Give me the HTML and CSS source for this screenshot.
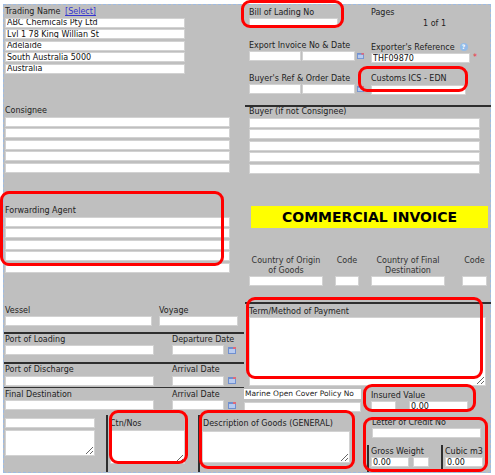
FILE: index.html
```html
<!DOCTYPE html>
<html lang="en">
<head>
<meta charset="utf-8">
<title>Commercial Invoice</title>
<link rel="stylesheet" href="styles.css">
</head>
<body>
<div class="sheet">
  <div class="top">
    <div class="col-left">
      <div class="block trading">
        <div class="lbl">Trading Name <a class="sel" href="#">[Select]</a></div>
        <div class="rows w180">
          <input class="inp" value="ABC Chemicals Pty Ltd">
          <input class="inp" value="Lvl 1 78 King Willian St">
          <input class="inp" value="Adelaide">
          <input class="inp" value="South Australia 5000">
          <input class="inp" value="Australia">
        </div>
      </div>
      <div class="block consignee">
        <div class="lbl">Consignee</div>
        <div class="rows w225">
          <input class="inp"><input class="inp"><input class="inp"><input class="inp"><input class="inp">
        </div>
      </div>
      <div class="block agent">
        <div class="lbl">Forwarding Agent</div>
        <div class="rows w225">
          <input class="inp"><input class="inp"><input class="inp"><input class="inp"><input class="inp">
        </div>
      </div>
      <div class="pair vessel-row">
        <div class="fld w147"><div class="lbl">Vessel</div><input class="inp full"></div>
        <div class="fld voyage"><div class="lbl">Voyage</div><input class="inp full"></div>
      </div>
      <div class="rule thick r1"></div>
      <div class="pair port-row">
        <div class="fld w149"><div class="lbl">Port of Loading</div><input class="inp full"></div>
        <div class="fld date">
          <div class="lbl">Departure Date</div>
          <div class="line"><input class="inp w52"><svg class="cal" width="8" height="7" viewBox="0 0 8 7"><rect x="0" y="0" width="8" height="7" fill="#6f8fd0"/><rect x="1" y="2" width="6" height="4" fill="#b8cbef"/><rect x="5" y="0" width="3" height="2" fill="#e06a78"/></svg></div>
        </div>
      </div>
      <div class="rule thick r2"></div>
      <div class="pair port-row discharge">
        <div class="fld w149"><div class="lbl">Port of Discharge</div><input class="inp full"></div>
        <div class="fld date">
          <div class="lbl">Arrival Date</div>
          <div class="line"><input class="inp w52"><svg class="cal" width="8" height="7" viewBox="0 0 8 7"><rect x="0" y="0" width="8" height="7" fill="#6f8fd0"/><rect x="1" y="2" width="6" height="4" fill="#b8cbef"/><rect x="5" y="0" width="3" height="2" fill="#e06a78"/></svg></div>
        </div>
      </div>
      <div class="rule thin"></div>
      <div class="pair port-row final">
        <div class="fld w149"><div class="lbl">Final Destination</div><input class="inp full"></div>
        <div class="fld date">
          <div class="lbl">Arrival Date</div>
          <div class="line"><input class="inp w52"><svg class="cal" width="8" height="7" viewBox="0 0 8 7"><rect x="0" y="0" width="8" height="7" fill="#6f8fd0"/><rect x="1" y="2" width="6" height="4" fill="#b8cbef"/><rect x="5" y="0" width="3" height="2" fill="#e06a78"/></svg></div>
        </div>
      </div>
    </div>

    <div class="col-right">
      <div class="rrow bill-row">
        <div class="fld w122"><div class="lbl">Bill of Lading No</div><input class="inp w89"></div>
        <div class="fld"><div class="lbl">Pages</div><div class="pages">1 of 1</div></div>
      </div>
      <div class="rrow exp-row">
        <div class="fld w122">
          <div class="lbl">Export Invoice No &amp; Date</div>
          <div class="line"><input class="inp w52"><input class="inp w53 gap1"><svg class="cal sm" width="7" height="6" viewBox="0 0 8 7"><rect x="0" y="0" width="8" height="7" fill="#6f8fd0"/><rect x="1" y="2" width="6" height="4" fill="#b8cbef"/><rect x="5" y="0" width="3" height="2" fill="#e06a78"/></svg></div>
        </div>
        <div class="fld ref">
          <div class="lbl">Exporter's Reference<span class="help">?</span></div>
          <div class="line"><input class="inp w99" value="THF09870"><span class="req">*</span></div>
        </div>
      </div>
      <div class="rrow buyref-row">
        <div class="fld w122">
          <div class="lbl">Buyer's Ref &amp; Order Date</div>
          <div class="line"><input class="inp w52"><input class="inp w53 gap1"><svg class="cal sm" width="7" height="6" viewBox="0 0 8 7"><rect x="0" y="0" width="8" height="7" fill="#6f8fd0"/><rect x="1" y="2" width="6" height="4" fill="#b8cbef"/><rect x="5" y="0" width="3" height="2" fill="#e06a78"/></svg></div>
        </div>
        <div class="fld">
          <div class="lbl">Customs ICS - EDN</div>
          <input class="inp w95 customs">
        </div>
      </div>
      <div class="rule thick rt1"></div>
      <div class="block buyer">
        <div class="lbl">Buyer (if not Consignee)</div>
        <div class="rows w231">
          <input class="inp"><input class="inp"><input class="inp"><input class="inp"><input class="inp">
        </div>
      </div>
      <div class="banner">COMMERCIAL INVOICE</div>
      <div class="country-row">
        <div class="cfld c1"><div class="clbl">Country of Origin<br>of Goods</div><input class="inp full"></div>
        <div class="cfld c2"><div class="clbl">Code<br>&nbsp;</div><input class="inp full"></div>
        <div class="cfld c3"><div class="clbl">Country of Final<br>Destination</div><input class="inp full"></div>
        <div class="cfld c4"><div class="clbl">Code<br>&nbsp;</div><input class="inp full"></div>
      </div>
      <div class="rule thick rt2"></div>
      <div class="term">
        <div class="lbl">Term/Method of Payment</div>
        <textarea class="ta term-ta"></textarea>
      </div>
      <div class="rrow marine-row">
        <div class="fld marine">
          <div class="marine-lbl">Marine Open Cover Policy No</div>
          <input class="inp full marine-inp">
        </div>
        <div class="fld insured">
          <div class="lbl">Insured Value</div>
          <div class="line"><input class="inp w25"><input class="inp w59 gap13" value="0.00"></div>
        </div>
      </div>
    </div>
  </div>

  <div class="bottom">
    <div class="cell cell-a">
      <input class="inp w90 a-inp">
      <textarea class="ta a-ta"></textarea>
    </div>
    <div class="vline"></div>
    <div class="cell cell-b">
      <div class="lbl">Ctn/Nos</div>
      <textarea class="ta b-ta"></textarea>
    </div>
    <div class="vline"></div>
    <div class="cell cell-c">
      <div class="lbl">Description of Goods (GENERAL)</div>
      <textarea class="ta c-ta"></textarea>
    </div>
    <div class="cell cell-d">
      <div class="lbl">Letter of Credit No</div>
      <input class="inp w109">
      <div class="weights">
        <div class="vline short"></div>
        <div class="fld gross">
          <div class="lbl">Gross Weight</div>
          <div class="line"><input class="inp w38" value="0.00"><input class="inp w16 gap4"></div>
        </div>
        <div class="vline short v2"></div>
        <div class="fld cubic">
          <div class="lbl">Cubic m3</div>
          <input class="inp w38" value="0.00">
        </div>
      </div>
    </div>
  </div>
</div>

<div class="mark m1"></div>
<div class="mark m2"></div>
<div class="mark m3"></div>
<div class="mark m4"></div>
<div class="mark m5"></div>
<div class="mark m6"></div>
<div class="mark m7"></div>
<div class="mark m8"></div>
</body>
</html>
```

FILE: styles.css
```css
* { box-sizing: border-box; }

html, body {
  margin: 0;
  padding: 0;
  background: #ffffff;
}

body {
  position: relative;
  width: 495px;
  height: 475px;
  overflow: hidden;
  font-family: "DejaVu Sans", Verdana, sans-serif;
  font-size: 8px;
  color: #222;
}

.sheet {
  margin: 4px 0 0 3px;
  width: 488px;
  height: 469px;
  border: 1px dashed #9dbbe3;
  background: #bfbfbf;
  display: flex;
  flex-direction: column;
}

.top {
  display: flex;
  height: 408px;
}

.col-left {
  width: 240px;
  padding-left: 1px;
}

.col-right {
  width: 246px;
  padding-left: 5px;
}

.lbl {
  height: 10px;
  line-height: 10px;
  white-space: nowrap;
}

.sel {
  color: #3535cf;
  text-decoration: underline;
  margin-left: 2px;
}

.inp {
  display: block;
  height: 10px;
  margin: 0;
  padding: 0 1px;
  border: 1px solid #d2d2d2;
  background: #fff;
  font-family: "DejaVu Sans", Verdana, sans-serif;
  font-size: 8px;
  color: #111;
  outline: none;
}

.ta {
  display: block;
  margin: 0;
  padding: 0;
  border: 1px solid #d2d2d2;
  background: #fff;
  font-family: "DejaVu Sans", Verdana, sans-serif;
  font-size: 8px;
  outline: none;
}

.full { width: 100%; }
.w25 { width: 25px; }
.w16 { width: 16px; }
.w38 { width: 38px; }
.w52 { width: 52px; }
.w53 { width: 53px; }
.w59 { width: 59px; }
.w89 { width: 89px; }
.w90 { width: 90px; }
.w95 { width: 95px; }
.w99 { width: 99px; }
.w109 { width: 109px; }
.gap1 { margin-left: 1px; }
.gap4 { margin-left: 4px; }
.gap13 { margin-left: 13px; }

.rows {
  display: flex;
  flex-direction: column;
  gap: 1.5px;
  padding-top: 0.5px;
}
.rows .inp { width: 100%; }
.w180 { width: 180px; }
.w225 { width: 225px; }
.w231 { width: 231px; }

.trading { margin-top: 2px; }
.consignee { margin-top: 32.5px; }
.agent { margin-top: 33.5px; }

.pair { display: flex; }
.fld { flex: none; }
.w147 { width: 147px; }
.w149 { width: 149px; }
.w122 { width: 122px; }

.vessel-row { margin-top: 33.5px; }
.voyage { width: 79px; margin-left: 7px; }

.line { display: flex; align-items: center; }

.date { margin-left: 18px; }
.cal { display: block; margin-left: 4px; }
.cal.sm { margin-left: 2px; }

.rule {
  height: 2px;
  background: #2e2e2e;
}
.rule.thin { height: 1px; margin-top: 1px; background: #333; }

.col-left .rule { margin-left: -1px; width: 240px; }
.r1 { margin-top: 5.5px; }
.port-row { margin-top: 1.5px; }
.r2 { margin-top: 6.5px; }
.discharge .inp { margin-top: 1px; }
.final { margin-top: 2px; }

/* right column */
.rrow { display: flex; }
.bill-row { margin-top: 3px; }
.pages {
  height: 10px;
  line-height: 10px;
  margin-top: 1px;
  margin-left: 52px;
}
.exp-row { margin-top: 12px; }
.ref { margin-top: 2px; }
.help {
  display: inline-block;
  width: 8px;
  height: 8px;
  margin-left: 5px;
  border-radius: 50%;
  background: #93bbe8;
  color: #fff;
  font-size: 6px;
  font-weight: bold;
  line-height: 8px;
  text-align: center;
  vertical-align: 1px;
}
.req {
  color: #ee3344;
  font-size: 8px;
  margin-left: 3px;
  line-height: 8px;
}
.buyref-row { margin-top: 11px; }
.customs { margin-top: 1px; }

.rt1 { margin-top: 9.5px; margin-left: -4px; width: 246px; }
.buyer { margin-top: 0.5px; }

.banner {
  margin-top: 32.5px;
  margin-left: 2px;
  width: 237px;
  height: 22px;
  background: #ffff00;
  color: #000;
  font-size: 14px;
  font-weight: bold;
  line-height: 22px;
  text-align: center;
  white-space: nowrap;
}

.country-row {
  display: flex;
  margin-top: 28px;
}
.cfld { flex: none; }
.clbl {
  height: 19px;
  line-height: 9.5px;
  text-align: center;
  white-space: nowrap;
  color: #333;
  display: flex;
  flex-direction: column;
  align-items: center;
}
.cfld .inp { margin-top: 1px; }
.c1 { width: 74px; }
.c2 { width: 24px; margin-left: 12px; }
.c3 { width: 74px; margin-left: 12px; }
.c4 { width: 25px; margin-left: 17px; }

.rt2 { margin-top: 16px; margin-left: -4px; width: 246px; }

.term { margin-top: 3px; }
.term-ta { width: 237px; height: 69px; }

.marine-row { margin-top: 3px; }
.marine { width: 117px; margin-left: -5px; }
.marine-lbl {
  height: 10px;
  line-height: 10px;
  background: #fff;
  font-size: 7.5px;
  padding-left: 1px;
  white-space: nowrap;
  overflow: hidden;
}
.marine-inp { margin-top: 3px; }
.insured { margin-left: 10px; margin-top: 2px; }

/* bottom */
.bottom {
  display: flex;
  flex: 1;
}
.cell { flex: none; }
.cell-a { width: 102px; padding-left: 1px; }
.a-inp { margin-top: 5px; }
.a-ta { margin-top: 2px; width: 90px; height: 26px; }

.vline {
  flex: none;
  width: 2px;
  margin-top: 2px;
  background: #2e2e2e;
}

.cell-b { width: 90px; padding-left: 2px; }
.cell-b .lbl { margin-top: 6px; }
.b-ta { margin-top: 1px; width: 75px; height: 34px; }

.cell-c { width: 166px; padding-left: 2px; }
.cell-c .lbl { margin-top: 6px; padding-left: 1px; }
.c-ta { margin-top: 2px; width: 148px; height: 32px; }

.cell-d { width: 124px; padding-left: 6px; }
.cell-d > .lbl { margin-top: 5px; }

.weights {
  display: flex;
  margin-top: 7px;
  height: 27px;
}
.vline.short { margin-top: 0; margin-left: -5px; }
.gross { margin-left: 2px; margin-top: 2px; }
.vline.v2 { margin-left: 12px; }
.cubic { margin-left: 2px; margin-top: 2px; }

/* annotation overlays */
.mark {
  position: absolute;
  border: 3px solid #ff0000;
  border-radius: 9px;
  z-index: 5;
  pointer-events: none;
}
.m1 { left: 241px; top: 0; width: 103px; height: 28px; }
.m2 { left: 358px; top: 66px; width: 110px; height: 26px; }
.m3 { left: 0; top: 191px; width: 224px; height: 75px; }
.m4 { left: 246px; top: 297px; width: 237px; height: 82px; }
.m5 { left: 363px; top: 384px; width: 113px; height: 28px; }
.m6 { left: 109px; top: 410px; width: 79px; height: 54px; }
.m7 { left: 199px; top: 410px; width: 156px; height: 59px; }
.m8 { left: 363px; top: 417px; width: 125px; height: 55px; }
```
